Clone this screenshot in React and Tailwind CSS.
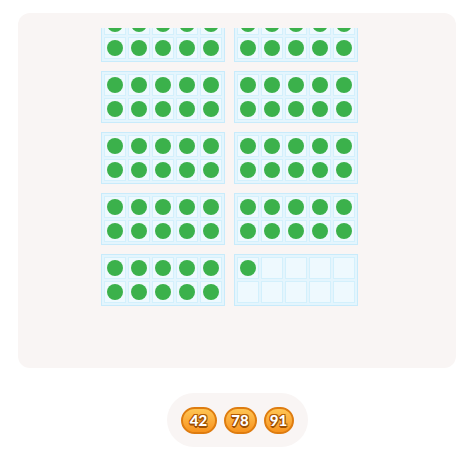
const frames = [10, 10, 10, 10, 10, 10, 10, 10, 10, 1];
const badges = [
  { n: 42, w: 'w-[36px]' },
  { n: 78, w: 'w-[33px]' },
  { n: 91, w: 'w-[30px]' },
];

function TenFrame({ count }) {
  return (
    <div className="w-[124px] h-[52px] border border-[#c8ebfb] bg-[#e4f5fd] p-[2px] grid grid-cols-5 grid-rows-2 gap-[2px]">
      {Array.from({ length: 10 }).map((_, i) => (
        <div key={i} className="border border-[#d3f0fc] bg-[#eef9fe] flex items-center justify-center">
          {i < count && <div className="w-4 h-4 rounded-full bg-[#3bb14b]" />}
        </div>
      ))}
    </div>
  );
}

export default function App() {
  return (
    <div className="w-[474px] h-[462px] bg-white flex flex-col items-center" style={{ fontFamily: '"DejaVu Sans", sans-serif' }}>
      <div className="mt-[13px] w-[438px] h-[355px] rounded-xl bg-[#f9f5f4] pt-[15px] pb-4 overflow-hidden">
        <div className="h-full overflow-hidden pl-[83px]">
          <div className="mt-[-18px] grid grid-cols-[124px_124px] gap-x-[9px] gap-y-[9px]">
            {frames.map((c, i) => <TenFrame key={i} count={c} />)}
          </div>
        </div>
      </div>

      <div className="mt-[25px] h-[54px] px-[14px] rounded-full bg-[#f9f5f4] flex items-center gap-[7px]">
        {badges.map(b => (
          <div
            key={b.n}
            className={`${b.w} h-[27px] rounded-full border-2 border-[#de7c10] bg-gradient-to-b from-[#ffc553] to-[#f7931c] flex items-center justify-center text-white text-[15px] font-black leading-none`}
            style={{
              fontFamily: 'Lato, "DejaVu Sans", sans-serif',
              textShadow: '1px 1px 0 #9c4d00, -1px 1px 0 #9c4d00, 1px -1px 0 #b35a00, -1px -1px 0 #b35a00, 0 2px 0 #9c4d00',
            }}
          >
            {b.n}
          </div>
        ))}
      </div>
    </div>
  );
}
